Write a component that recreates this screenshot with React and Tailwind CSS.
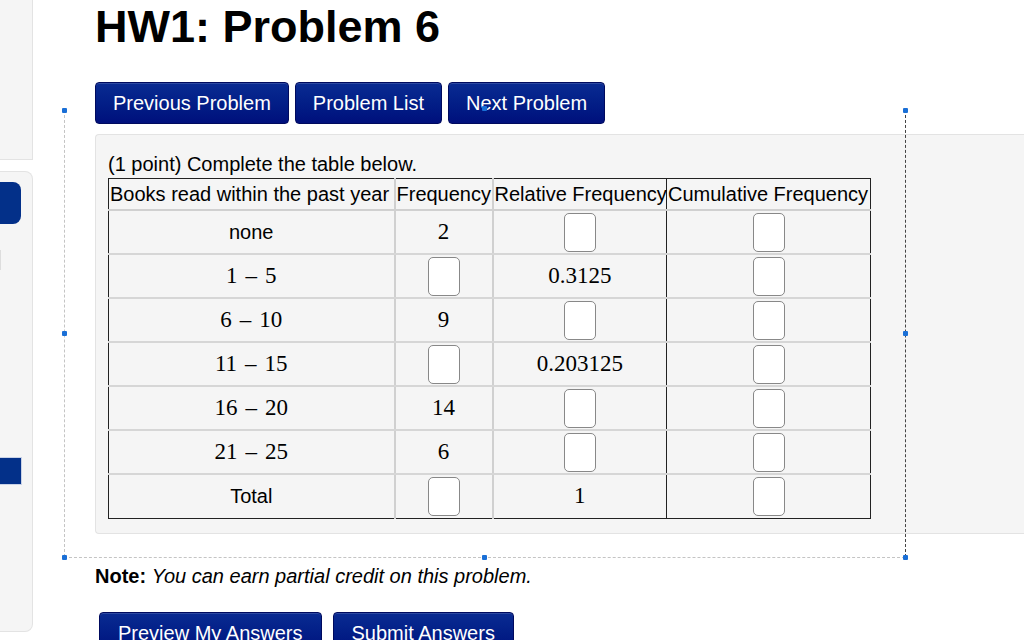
const sans = { fontFamily: '"Liberation Sans", Arial, Helvetica, sans-serif' };

const rows = [
  { label: 'none', text: true, freq: '2', rel: null },
  { label: ['1', '5'], freq: null, rel: '0.3125' },
  { label: ['6', '10'], freq: '9', rel: null },
  { label: ['11', '15'], freq: null, rel: '0.203125' },
  { label: ['16', '20'], freq: '14', rel: null },
  { label: ['21', '25'], freq: '6', rel: null },
  { label: 'Total', text: true, freq: null, rel: '1' }
];

function Box() {
  return (
    <input
      type="text"
      readOnly
      className="mx-auto block h-[39px] w-[32px] rounded-[5px] border border-[#888] bg-white outline-none"
    />
  );
}

function Math({ children }) {
  return <span className="font-['Liberation_Serif',serif] text-[23px] leading-none">{children}</span>;
}

function NavButton({ children, wide }) {
  return (
    <button
      className={`flex h-[42px] items-center rounded-[4px] border border-[#000a5e] bg-gradient-to-b from-[#0a2b92] to-[#000f7c] text-[20px] leading-none text-white shadow-[inset_0_1px_0_rgba(255,255,255,0.15)] ${
        wide ? 'px-[18px]' : 'px-[17px]'
      }`}
    >
      {children}
    </button>
  );
}

function Sidebar() {
  return (
    <div className="flex w-[33px] shrink-0 flex-col">
      <div className="h-[160px] border-r border-b border-[#e3e3e3] bg-[#f5f5f5]" />
      <div className="mt-[11px] flex h-[461px] flex-col rounded-r-[8px] border border-l-0 border-[#e3e3e3] bg-[#f5f5f5]">
        <div className="mt-[10px] h-[42px] w-[21px] rounded-r-[8px] bg-[#033089]" />
        <div className="mt-[26px] h-[20px] w-[1px] bg-[#dddddd]" />
        <div className="mt-[187px] h-[28px] w-[22px] border border-l-0 border-[#c9d2e6] bg-[#033089]" />
      </div>
    </div>
  );
}

function Handle({ className }) {
  return <div className={`absolute h-[5px] w-[5px] rounded-[1px] bg-[#1a6fd6] ${className}`} />;
}

export default function App() {
  return (
    <div className="relative h-[640px] w-[1024px] overflow-hidden bg-white text-black" style={sans}>
      <div className="flex">
        <Sidebar />

        <main className="ml-[62px] flex-1">
          <h1 className="pt-[4px] text-[45px] font-bold leading-[45px]">HW1: Problem 6</h1>

          <div className="mt-[33px] flex gap-[6px]">
            <NavButton>Previous Problem</NavButton>
            <NavButton>Problem List</NavButton>
            <NavButton>Next Problem</NavButton>
          </div>

          {/* problem body */}
          <div className="mt-[10px] rounded-l-[4px] border border-r-0 border-[#e3e3e3] bg-[#f5f5f5] pt-[19px] pb-[14px] pl-[12px]">
            <p className="text-[20px] leading-[20px]">(1 point) Complete the table below.</p>
            <table className="mt-[4px] w-[762px] table-fixed border-collapse border border-[#222] text-[20px]">
              <colgroup>
                <col className="w-[286px]" />
                <col className="w-[98px]" />
                <col className="w-[174px]" />
                <col className="w-[204px]" />
              </colgroup>
              <thead>
                <tr className="h-[31px]">
                  <th className="whitespace-nowrap border-r-2 border-b-2 border-[#d0d0d0] pl-[1px] text-left font-normal">Books read within the past year</th>
                  <th className="whitespace-nowrap border-r-2 border-b-2 border-[#d0d0d0] pl-[1px] text-left font-normal">Frequency</th>
                  <th className="whitespace-nowrap border-b-2 border-[#d0d0d0] pl-[1px] text-left font-normal">Relative Frequency</th>
                  <th className="whitespace-nowrap border-b-2 border-l border-b-[#d0d0d0] border-l-[#222] pl-[1px] text-left font-normal">Cumulative Frequency</th>
                </tr>
              </thead>
              <tbody>
                {rows.map((r, i) => {
                  const last = i === rows.length - 1;
                  const rowLine = last ? '' : 'border-b-2 border-b-[#d6d6d6]';
                  return (
                    <tr key={i} className="h-[44px]">
                      <td className={`border-r-2 border-r-[#d0d0d0] text-center ${rowLine}`}>
                        {r.text ? (
                          r.label
                        ) : (
                          <Math>
                            {r.label[0]}
                            <span className="mx-[8px]">–</span>
                            {r.label[1]}
                          </Math>
                        )}
                      </td>
                      <td className={`border-r-2 border-r-[#d0d0d0] text-center ${rowLine}`}>
                        {r.freq ? <Math>{r.freq}</Math> : <Box />}
                      </td>
                      <td className={`text-center ${rowLine}`}>{r.rel ? <Math>{r.rel}</Math> : <Box />}</td>
                      <td className={`border-l border-l-[#222] text-center ${rowLine}`}>
                        <Box />
                      </td>
                    </tr>
                  );
                })}
              </tbody>
            </table>
          </div>

          <p className="mt-[31px] text-[20px] leading-[23px]">
            <b>Note:</b> <i>You can earn partial credit on this problem.</i>
          </p>

          <div className="mt-[24px] ml-[4px] flex gap-[11px]">
            <NavButton wide>Preview My Answers</NavButton>
            <NavButton wide>Submit Answers</NavButton>
          </div>
        </main>
      </div>

      {/* selection outline */}
      <div className="absolute left-[64px] top-[110px] h-[447px] border-l border-dashed border-[#c4c4c4]" />
      <div className="absolute left-[64px] top-[557px] w-[841px] border-t border-dashed border-[#c4c4c4]" />
      <div className="absolute left-[905px] top-[110px] h-[447px] border-l border-dashed border-[#444]" />
      <Handle className="left-[62px] top-[108px]" />
      <Handle className="left-[482px] top-[106px]" />
      <Handle className="left-[903px] top-[108px]" />
      <Handle className="left-[62px] top-[331px]" />
      <Handle className="left-[903px] top-[331px]" />
      <Handle className="left-[62px] top-[555px]" />
      <Handle className="left-[482px] top-[555px]" />
      <Handle className="left-[903px] top-[555px]" />
    </div>
  );
}
